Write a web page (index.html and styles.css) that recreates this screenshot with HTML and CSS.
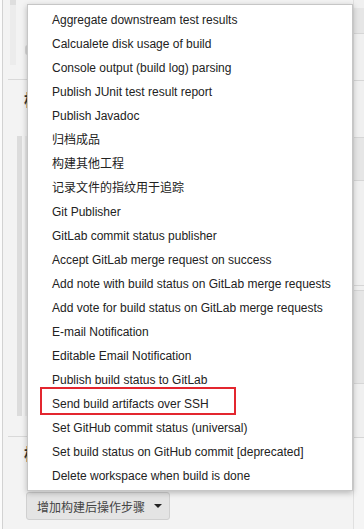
FILE: index.html
```html
<!DOCTYPE html>
<html>
<head>
<meta charset="utf-8">
<link rel="stylesheet" href="styles.css">
</head>
<body>
<div class="page">
  <div class="content">
    <div class="top">
      <div class="top-strip"><div class="top-square"></div></div>
      <div class="top-knob"></div>
    </div>
    <div class="section-head">构建</div>
    <div class="panel">
      <div class="strip-dark"></div>
      <div class="strip-light"></div>
    </div>
    <div class="panel-foot"></div>
    <div class="section-head second">构建后操作</div>
    <div class="btn-row">
      <button class="add-btn">增加构建后操作步骤<span class="caret"></span></button>
    </div>
  </div>
  <div class="side">
    <div class="band b-light" style="height:8px"></div>
    <div class="band b-dark" style="height:25px"></div>
    <div class="band b-light line" style="height:47px"></div>
    <div class="band b-light line" style="height:57px"></div>
    <div class="band b-dark line" style="height:43px"></div>
    <div class="band b-light line" style="height:105px"></div>
    <div class="band b-light line" style="height:5px"></div>
    <div class="band b-dark line" style="height:93px"></div>
    <div class="band b-light line" style="height:54px"></div>
    <div class="band b-pale"></div>
  </div>
</div>

<div class="menu">
  <div class="item">Aggregate downstream test results</div>
  <div class="item">Calcualete disk usage of build</div>
  <div class="item">Console output (build log) parsing</div>
  <div class="item">Publish JUnit test result report</div>
  <div class="item">Publish Javadoc</div>
  <div class="item">归档成品</div>
  <div class="item">构建其他工程</div>
  <div class="item">记录文件的指纹用于追踪</div>
  <div class="item">Git Publisher</div>
  <div class="item">GitLab commit status publisher</div>
  <div class="item">Accept GitLab merge request on success</div>
  <div class="item">Add note with build status on GitLab merge requests</div>
  <div class="item">Add vote for build status on GitLab merge requests</div>
  <div class="item">E-mail Notification</div>
  <div class="item">Editable Email Notification</div>
  <div class="item">Publish build status to GitLab</div>
  <div class="item"><span class="marked">Send build artifacts over SSH</span></div>
  <div class="item">Set GitHub commit status (universal)</div>
  <div class="item">Set build status on GitHub commit [deprecated]</div>
  <div class="item">Delete workspace when build is done</div>
</div>
</body>
</html>
```

FILE: styles.css
```css
html, body {
  margin: 0;
  padding: 0;
  background: #fbfbfb;
  font-family: "Liberation Sans", Arial, "Noto Sans CJK SC", sans-serif;
}

.page {
  margin-left: 2px;
  border-left: 1px solid #d2d2d2;
  height: 529px;
  display: flex;
  background: #f3f3f3;
  overflow: hidden;
}

.content {
  flex: 1;
  display: flex;
  flex-direction: column;
}

.top {
  height: 80px;
  margin-left: 5px;
  border-bottom: 1px solid #d9d9d9;
  display: flex;
  padding-left: 2px;
  box-sizing: border-box;
}

.top-strip {
  width: 6px;
  height: 65px;
  background: #ececec;
}

.top-square {
  height: 5px;
  background: #dedede;
}

.top-knob {
  margin: 45px 0 0 9px;
  width: 6px;
  height: 10px;
  border-radius: 3px;
  background: #d6d6d6;
}

.section-head {
  height: 56px;
  box-sizing: border-box;
  padding: 11px 0 0 21px;
  font-size: 16px;
  font-weight: bold;
  color: #333;
  line-height: 20px;
}

.panel {
  height: 280px;
  display: flex;
  padding-left: 14px;
  gap: 3px;
}

.strip-dark {
  width: 5px;
  background: #dcdcdc;
}

.strip-light {
  width: 2px;
  background: #e9e9e9;
}

.panel-foot {
  height: 20px;
  margin-left: 5px;
  border-bottom: 1px solid #d9d9d9;
}

.section-head.second {
  height: 55px;
  padding-top: 8px;
}

.btn-row {
  padding-left: 23px;
}

.add-btn {
  height: 28px;
  width: 144px;
  box-sizing: border-box;
  border: 1px solid #d0d0d0;
  border-radius: 3px;
  background: #e4e4e4;
  color: #444;
  font-family: "Liberation Sans", "Noto Sans CJK SC", sans-serif;
  font-size: 12px;
  padding: 0 0 0 10px;
  display: flex;
  align-items: center;
  text-align: left;
}

.caret {
  margin-left: 9px;
  width: 0;
  height: 0;
  border-left: 4px solid transparent;
  border-right: 4px solid transparent;
  border-top: 4px solid #222;
}

.side {
  width: 10px;
  display: flex;
  flex-direction: column;
  border-left: 1px solid #e0e0e0;
}

.band {
  flex: none;
  box-sizing: border-box;
}

.band.line {
  border-top: 1px solid #d6d6d6;
}

.b-light { background: #f0f0f0; }
.b-dark { background: #e6e6e6; }
.b-pale { flex: 1; background: #f5f5f5; border-top: 1px solid #d6d6d6; }

.menu {
  position: absolute;
  left: 27px;
  top: 4px;
  width: 324px;
  padding: 3px 0 2px;
  background: #fff;
  border: 1px solid #c6c6c6;
  box-shadow: 0 2px 6px rgba(0, 0, 0, 0.25);
}

.item {
  height: 24px;
  line-height: 24px;
  padding-left: 24px;
  font-size: 12px;
  color: #222;
  white-space: nowrap;
  font-family: "Liberation Sans", Arial, "Noto Sans CJK SC", sans-serif;
}

.marked {
  position: relative;
  display: inline-block;
}

.marked::after {
  content: "";
  position: absolute;
  left: -12px;
  right: -27px;
  top: -5px;
  bottom: 1px;
  border: 2px solid #e3262f;
}
```
